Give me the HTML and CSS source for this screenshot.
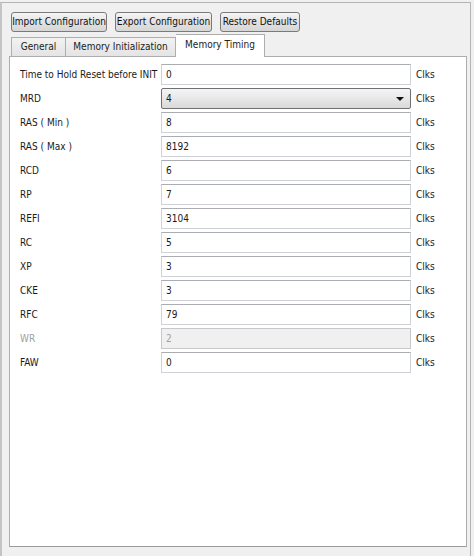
FILE: index.html
```html
<!DOCTYPE html>
<html>
<head>
<meta charset="utf-8">
<link rel="stylesheet" href="styles.css">
</head>
<body>
<div class="window">
  <div class="toolbar">
    <button class="btn">Import Configuration</button>
    <button class="btn">Export Configuration</button>
    <button class="btn">Restore Defaults</button>
  </div>
  <div class="tabs">
    <div class="tab">General</div>
    <div class="tab">Memory Initialization</div>
    <div class="tab active">Memory Timing</div>
  </div>
  <div class="panel">
    <div class="form">
      <div class="label">Time to Hold Reset before INIT</div><div class="field">0</div><div class="unit">Clks</div>
      <div class="label">MRD</div><div class="combo"><span>4</span><span class="arrow"></span></div><div class="unit">Clks</div>
      <div class="label">RAS ( Min )</div><div class="field">8</div><div class="unit">Clks</div>
      <div class="label">RAS ( Max )</div><div class="field">8192</div><div class="unit">Clks</div>
      <div class="label">RCD</div><div class="field">6</div><div class="unit">Clks</div>
      <div class="label">RP</div><div class="field">7</div><div class="unit">Clks</div>
      <div class="label">REFI</div><div class="field">3104</div><div class="unit">Clks</div>
      <div class="label">RC</div><div class="field">5</div><div class="unit">Clks</div>
      <div class="label">XP</div><div class="field">3</div><div class="unit">Clks</div>
      <div class="label">CKE</div><div class="field">3</div><div class="unit">Clks</div>
      <div class="label">RFC</div><div class="field">79</div><div class="unit">Clks</div>
      <div class="label disabled">WR</div><div class="field disabled">2</div><div class="unit">Clks</div>
      <div class="label">FAW</div><div class="field">0</div><div class="unit">Clks</div>
    </div>
  </div>
</div>
</body>
</html>
```
FILE: styles.css
```css
html, body {
  margin: 0;
  padding: 0;
  background: #f0f0f0;
}
body {
  font-family: "DejaVu Sans Condensed", "Liberation Sans Narrow", "Liberation Sans", sans-serif;
  font-size: 10px;
  color: #1a1a1a;
  width: 474px;
  height: 556px;
  overflow: hidden;
}
.window {
  box-sizing: border-box;
  width: 471px;
  height: 556px;
  margin-top: 2px;
  border-top: 1px solid #b4b4b4;
  border-left: 2px solid #c4c4c4;
  border-right: 1px solid #b4b4b4;
  padding: 9px 3px 0 7px;
}
.toolbar {
  display: flex;
  gap: 8px;
  padding-left: 2px;
}
.btn {
  font: inherit;
  color: #111;
  white-space: nowrap;
  height: 20px;
  padding: 0;
  border: 1px solid #7a7a7a;
  border-radius: 3px;
  background: linear-gradient(#f6f6f6, #e2e2e2 50%, #d6d6d6);
  line-height: 18px;
}
.btn:nth-child(1) { width: 96px; }
.btn:nth-child(2) { width: 97px; }
.btn:nth-child(3) { width: 80px; }
.tabs {
  display: flex;
  align-items: flex-end;
  height: 22px;
  margin-top: 2px;
  padding-left: 2px;
  position: relative;
  z-index: 1;
}
.tab {
  box-sizing: border-box;
  white-space: nowrap;
  height: 19px;
  line-height: 18px;
  padding: 0;
  text-align: center;
  border: 1px solid #adadad;
  border-bottom: none;
  background: linear-gradient(#f2f2f2, #e4e4e4);
  color: #222;
}
.tab:nth-child(1) { width: 55px; }
.tab:nth-child(2) { width: 110px; border-left: none; }
.tab.active {
  width: 89px;
  height: 23px;
  line-height: 20px;
  background: #fff;
  border-left: none;
  margin-bottom: -1px;
}
.panel {
  box-sizing: border-box;
  width: 458px;
  height: 491px;
  background: #fff;
  border: 1px solid #adadad;
  border-bottom-color: #9a9a9a;
  padding: 7px 0 0 10px;
}
.form {
  display: grid;
  grid-template-columns: 136px 250px auto;
  column-gap: 5px;
  row-gap: 3px;
  align-items: center;
}
.label {
  line-height: 21px;
  white-space: nowrap;
}
.field, .combo {
  box-sizing: border-box;
  height: 21px;
  line-height: 19px;
  border: 1px solid #cfd3d8;
  border-top-color: #abadb3;
  padding: 0 4px;
  background: #fff;
}
.combo {
  display: flex;
  justify-content: space-between;
  align-items: center;
  border: 1px solid #707070;
  border-radius: 2px;
  background: linear-gradient(#f4f4f4, #e8e8e8 50%, #d9d9d9);
  padding: 0 5px 0 4px;
}
.arrow {
  width: 0;
  height: 0;
  border-left: 4px solid transparent;
  border-right: 4px solid transparent;
  border-top: 4px solid #111;
  margin-right: 1px;
}
.unit {
  line-height: 21px;
}
.label.disabled { color: #a0a0a0; }
.field.disabled {
  background: #f0f0f0;
  color: #a0a0a0;
  border-color: #c8c8c8;
}
```
